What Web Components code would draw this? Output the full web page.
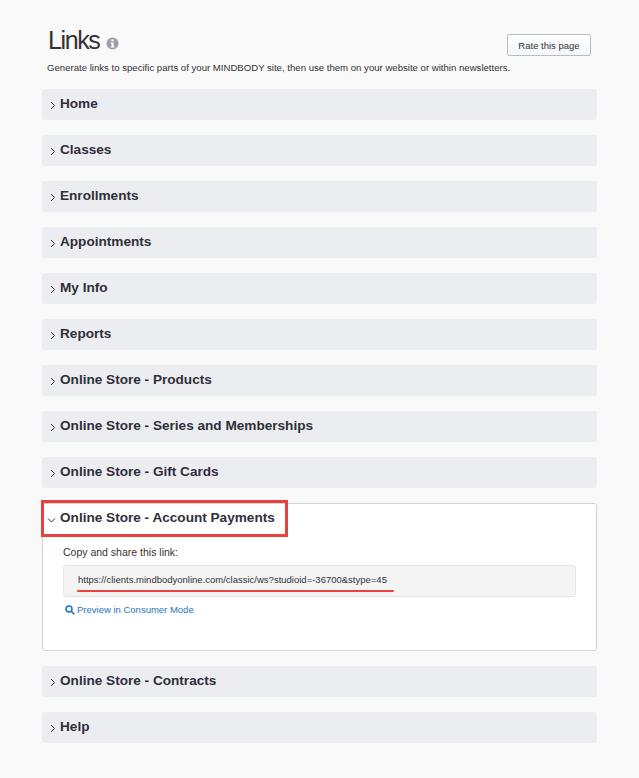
<!DOCTYPE html>
<html>
<head>
<meta charset="utf-8">
<title>Links</title>
<style>
  html, body { margin: 0; padding: 0; background: #f9f9f9; }
  body { font-family: "Liberation Sans", Arial, sans-serif; color: #333; }
</style>
</head>
<body>
<links-page>
  <page-header></page-header>
  <link-section label="Home"></link-section>
  <link-section label="Classes"></link-section>
  <link-section label="Enrollments"></link-section>
  <link-section label="Appointments"></link-section>
  <link-section label="My Info"></link-section>
  <link-section label="Reports"></link-section>
  <link-section label="Online Store - Products"></link-section>
  <link-section label="Online Store - Series and Memberships"></link-section>
  <link-section label="Online Store - Gift Cards"></link-section>
  <link-section label="Online Store - Account Payments" open marked>
    <share-link url="https://clients.mindbodyonline.com/classic/ws?studioid=-36700&amp;stype=45"></share-link>
  </link-section>
  <link-section label="Online Store - Contracts"></link-section>
  <link-section label="Help"></link-section>
</links-page>

<script>
class LinksPage extends HTMLElement {
  constructor () {
    super()
    this.attachShadow({mode: 'open'})
    this.shadowRoot.innerHTML = `
      <style>
        :host {
          box-sizing: border-box;
          display: flex;
          flex-direction: column;
          gap: 15px;
          padding: 0 42px 35px;
          width: 639px;
        }
      </style>
      <slot></slot>
    `
  }
}

class PageHeader extends HTMLElement {
  constructor () {
    super()
    this.attachShadow({mode: 'open'})
    this.shadowRoot.innerHTML = `
      <style>
        :host { display: block; height: 74px; padding: 15px 6px 0 5px; box-sizing: border-box; }
        .top { display: flex; justify-content: space-between; align-items: flex-start; height: 46px; padding-left: 1px; }
        .title { display: flex; align-items: center; gap: 7px; }
        h1 {
          color: #333;
          font-size: 25px;
          font-weight: 400;
          letter-spacing: -1.4px;
          line-height: 50px;
          margin: 0;
        }
        svg { display: block; margin-top: 7px; }
        button {
          background: linear-gradient(#fff, #f3f6fb);
          border: 1px solid #b9bcc4;
          border-radius: 2px;
          box-sizing: border-box;
          color: #333;
          font: 9.5px "Liberation Sans", Arial, sans-serif;
          height: 22px;
          margin-top: 19px;
          padding: 0;
          width: 84px;
        }
        p { color: #333; font-size: 9.6px; line-height: 13px; margin: 0; white-space: nowrap; }
      </style>
      <div class="top">
        <div class="title">
          <h1>Links</h1>
          <svg width="13" height="13" viewBox="0 0 13 13">
            <circle cx="6.5" cy="6.5" r="6" fill="#9b9fa8"/>
            <rect x="5.4" y="2.4" width="2.2" height="2" fill="#fff"/>
            <path d="M4.6 5.4h3v4h1v1.1H4.6V9.4h1V6.5h-1z" fill="#fff"/>
          </svg>
        </div>
        <button type="button">Rate this page</button>
      </div>
      <p>Generate links to specific parts of your MINDBODY site, then use them on your website or within newsletters.</p>
    `
  }
}

class LinkSection extends HTMLElement {
  constructor () {
    super()
    this.attachShadow({mode: 'open'})
    const open = this.hasAttribute('open')
    const chevron = open
      ? '<path d="M1 2.5l3.5 3.5L8 2.5" />'
      : '<path d="M3 1l3.5 3.5L3 8" />'
    this.shadowRoot.innerHTML = `
      <style>
        :host { display: block; position: relative; }
        .bar {
          align-items: center;
          background: #ecedf1;
          border-radius: 3px;
          box-sizing: border-box;
          display: flex;
          height: 31px;
          padding-left: 6px;
        }
        :host([open]) .bar { background: transparent; }
        :host([open]) {
          background: #fff;
          border: 1px solid #d4d4d4;
          border-radius: 3px;
          box-sizing: border-box;
          height: 148px;
        }
        :host([open]) .bar { height: 29px; padding-left: 4px; }
        :host([open]) h2 { margin-left: 4px; }
        svg { display: block; flex: none; fill: none; stroke: #333; stroke-width: 1; margin-top: 3px; }
        :host([open]) svg { margin-top: 5px; }
        h2 {
          color: #2f2f3a;
          font-size: 13.6px;
          font-weight: 700;
          line-height: 16px;
          margin: -1px 0 0 3px;
        }
        .mark {
          border: 3px solid #e8413e;
          box-sizing: border-box;
          display: none;
          height: 37px;
          left: -2px;
          pointer-events: none;
          position: absolute;
          top: -4px;
          width: 247px;
        }
        :host([marked]) .mark { display: block; }
      </style>
      <div class="bar">
        <svg width="9" height="10" viewBox="0 0 9 10">${chevron}</svg>
        <h2>${this.getAttribute('label')}</h2>
      </div>
      <div class="mark"></div>
      <slot></slot>
    `
  }
}

class ShareLink extends HTMLElement {
  constructor () {
    super()
    this.attachShadow({mode: 'open'})
    this.shadowRoot.innerHTML = `
      <style>
        :host { display: block; padding: 13px 20px 0 20px; color: #333; }
        label { display: block; font-size: 10.5px; line-height: 13px; }
        .url {
          align-items: center;
          background: #f4f4f4;
          border: 1px solid #e6e6e6;
          border-radius: 3px;
          box-sizing: border-box;
          display: flex;
          font-size: 9.5px;
          height: 32px;
          margin-top: 6px;
          padding: 0 0 3px 14px;
          position: relative;
        }
        .underline {
          background: #e8413e;
          border-radius: 1px;
          height: 2px;
          left: 13px;
          position: absolute;
          top: 24px;
          width: 317px;
        }
        a {
          align-items: center;
          color: #1a75bb;
          display: flex;
          font-size: 9.5px;
          gap: 2px;
          line-height: 13px;
          margin: 6px 0 0 2px;
          text-decoration: none;
        }
        svg { display: block; fill: none; stroke: #1a75bb; }
      </style>
      <label>Copy and share this link:</label>
      <div class="url"><span>${this.getAttribute('url').replace(/&/g, '&amp;')}</span><div class="underline"></div></div>
      <a href="#">
        <svg width="10" height="10" viewBox="0 0 10 10" stroke-width="1.5">
          <circle cx="4" cy="4" r="3"/>
          <path d="M6.2 6.2L9.4 9.4"/>
        </svg>
        <span>Preview in Consumer Mode</span>
      </a>
    `
  }
}

window.customElements.define('links-page', LinksPage)
window.customElements.define('page-header', PageHeader)
window.customElements.define('link-section', LinkSection)
window.customElements.define('share-link', ShareLink)
</script>
</body>
</html>
